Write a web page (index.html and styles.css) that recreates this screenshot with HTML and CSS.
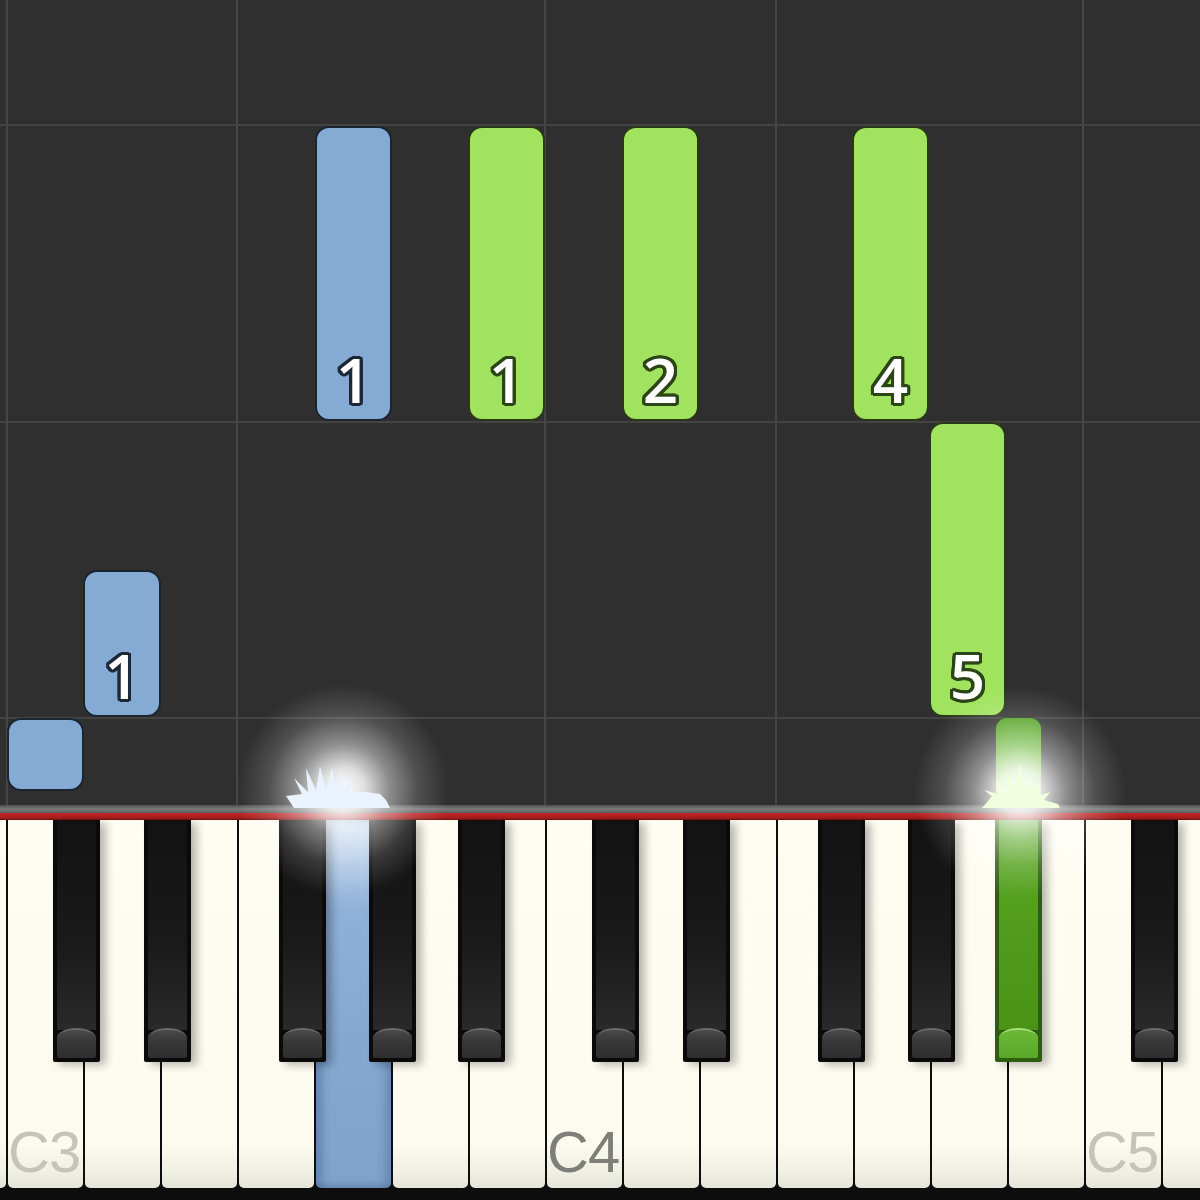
FILE: index.html
```html
<!DOCTYPE html>
<html>
<head>
<meta charset="utf-8">
<link rel="stylesheet" href="styles.css">
</head>
<body>
<div class="screen">
  <div class="roll">
    <div class="vl v1"></div><div class="vl v2"></div><div class="vl v3"></div><div class="vl v4"></div><div class="vl v5"></div>
    <div class="hl h1"></div><div class="hl h2"></div><div class="hl h3"></div>

    <div class="note blue n-a"><span class="num num-blue">1</span></div>
    <div class="note green n-b"><span class="num num-green">1</span></div>
    <div class="note green n-c"><span class="num num-green">2</span></div>
    <div class="note green n-d"><span class="num num-green">4</span></div>
    <div class="note green n-e"><span class="num num-green">5</span></div>
    <div class="note blue n-f"><span class="num num-blue">1</span></div>
    <div class="note blue n-g"></div>
    <div class="note active n-h"></div>
  </div>
  <div class="rail"></div>
  <div class="redline"></div>
  <div class="keyboard">
    <div class="whites">
      <div class="wk"></div>
      <div class="wk"><span class="klabel light">C3</span></div>
      <div class="wk"></div>
      <div class="wk"></div>
      <div class="wk"></div>
      <div class="wk pressed"></div>
      <div class="wk"></div>
      <div class="wk"></div>
      <div class="wk"><span class="klabel dark">C4</span></div>
      <div class="wk"></div>
      <div class="wk"></div>
      <div class="wk"></div>
      <div class="wk"></div>
      <div class="wk"></div>
      <div class="wk"></div>
      <div class="wk"><span class="klabel light">C5</span></div>
      <div class="wk"></div>
    </div>
    <div class="bk b1"></div>
    <div class="bk b2"></div>
    <div class="bk b3"></div>
    <div class="bk b4"></div>
    <div class="bk b5"></div>
    <div class="bk b6"></div>
    <div class="bk b7"></div>
    <div class="bk b8"></div>
    <div class="bk b9"></div>
    <div class="bk b10 on"></div>
    <div class="bk b11"></div>
  </div>

  <div class="glow glow-blue"></div>
  <div class="glow glow-green"></div>
  <svg class="spark spark-blue" width="110" height="44" viewBox="0 0 110 44">
    <polygon points="0,32 16,30 8,14 22,28 20,4 30,26 34,2 40,26 46,4 50,26 56,6 58,26 64,10 64,28 80,28 94,30 100,36 104,44 8,44" fill="#e9f2fe"/>
  </svg>
  <svg class="spark spark-green" width="80" height="46" viewBox="0 0 80 46">
    <polygon points="2,44 10,34 2,28 16,32 14,18 24,30 26,10 32,28 38,2 42,26 48,12 50,30 58,20 56,34 68,30 62,38 76,42 78,46 0,46" fill="#f2ffde"/>
  </svg>
</div>
</body>
</html>
```

FILE: styles.css
```css
html, body {
  margin: 0;
  padding: 0;
  background: #0d0d0d;
}

.screen {
  position: relative;
  width: 1200px;
  height: 1200px;
  overflow: hidden;
  background: #0d0d0d;
}

.roll {
  position: relative;
  height: 805px;
  background: #2f2f2f;
  overflow: hidden;
}

.vl {
  position: absolute;
  top: 0;
  bottom: 0;
  width: 2px;
  background: #464646;
}
.v1 { left: 6px; }
.v2 { left: 236px; }
.v3 { left: 544px; }
.v4 { left: 775px; }
.v5 { left: 1082px; }

.hl {
  position: absolute;
  left: 0;
  right: 0;
  height: 2px;
  background: #434343;
}
.h1 { top: 124px; }
.h2 { top: 421px; }
.h3 { top: 717px; }

.note {
  position: absolute;
  box-sizing: border-box;
  border: 2px solid;
  border-radius: 14px;
  display: flex;
  align-items: flex-end;
  justify-content: center;
}
.blue {
  background: #85aad4;
  border-color: #1b2531;
}
.green {
  background: #a1e35e;
  border-color: #28391a;
}
.active {
  border: none;
  border-radius: 11px 11px 0 0;
  background: linear-gradient(#4f9f1f, #6cbc34 45%, #a6df6e 85%, #d8f7b8);
  box-shadow: 0 0 0 1px #2a3a1e;
}

.n-a { left: 315px; top: 126px; width: 77px; height: 295px; }
.n-b { left: 468px; top: 126px; width: 77px; height: 295px; }
.n-c { left: 622px; top: 126px; width: 77px; height: 295px; }
.n-d { left: 852px; top: 126px; width: 77px; height: 295px; }
.n-e { left: 929px; top: 422px; width: 77px; height: 295px; }
.n-f { left: 83px; top: 570px; width: 78px; height: 147px; }
.n-g { left: 7px; top: 718px; width: 77px; height: 73px; }
.n-h { left: 996px; top: 718px; width: 45px; height: 100px; }

.num {
  font-family: "Open Sans", "DejaVu Sans", sans-serif;
  font-weight: 600;
  font-size: 62px;
  line-height: 62px;
  color: #ffffff;
  padding-bottom: 9px;
}
.num-blue {
  text-shadow:
    3px 0 0 #1c2837, -3px 0 0 #1c2837, 0 3px 0 #1c2837, 0 -3px 0 #1c2837,
    2px 2px 0 #1c2837, -2px -2px 0 #1c2837, 2px -2px 0 #1c2837, -2px 2px 0 #1c2837,
    3px 1px 0 #1c2837, -3px 1px 0 #1c2837, 3px -1px 0 #1c2837, -3px -1px 0 #1c2837,
    1px 3px 0 #1c2837, -1px 3px 0 #1c2837, 1px -3px 0 #1c2837, -1px -3px 0 #1c2837,
    3px 2px 0 #1c2837, -3px 2px 0 #1c2837, 3px -2px 0 #1c2837, -3px -2px 0 #1c2837;
}
.num-green {
  text-shadow:
    3px 0 0 #2b4516, -3px 0 0 #2b4516, 0 3px 0 #2b4516, 0 -3px 0 #2b4516,
    2px 2px 0 #2b4516, -2px -2px 0 #2b4516, 2px -2px 0 #2b4516, -2px 2px 0 #2b4516,
    3px 1px 0 #2b4516, -3px 1px 0 #2b4516, 3px -1px 0 #2b4516, -3px -1px 0 #2b4516,
    1px 3px 0 #2b4516, -1px 3px 0 #2b4516, 1px -3px 0 #2b4516, -1px -3px 0 #2b4516,
    3px 2px 0 #2b4516, -3px 2px 0 #2b4516, 3px -2px 0 #2b4516, -3px -2px 0 #2b4516;
}

.rail {
  height: 8px;
  background: linear-gradient(#505050, #7a7a7a 50%, #5c5c5c);
}
.redline {
  height: 7px;
  background: linear-gradient(#c42727, #a81c1c 70%, #701010);
}

.keyboard {
  position: relative;
  height: 368px;
}

.whites {
  display: flex;
  gap: 2px;
  height: 100%;
  margin-left: -69px;
}
.wk {
  flex: 0 0 75px;
  box-sizing: border-box;
  background: linear-gradient(#fffdf2, #fdfbf0 88%, #efeee3 96%, #e6e5da);
  border-radius: 0 0 5px 5px;
  display: flex;
  align-items: flex-end;
  overflow: hidden;
}
.wk.pressed {
  background: linear-gradient(#c7daf0, #8fb0d8 25%, #84a8d2 60%, #7ea2cc);
  box-shadow: inset 6px 0 8px rgba(20, 40, 70, 0.25), inset -6px 0 8px rgba(20, 40, 70, 0.2);
}

.klabel {
  font-family: "Liberation Sans", Arial, sans-serif;
  font-size: 58px;
  line-height: 58px;
  padding-bottom: 7px;
  letter-spacing: -1px;
}
.klabel.light { color: #c4c4bd; }
.klabel.dark { color: #7f7f7a; }

.bk {
  position: absolute;
  top: 0;
  width: 47px;
  height: 242px;
  background: #0a0a0a;
  border-radius: 0 0 2px 2px;
  box-shadow: 6px 3px 8px rgba(0, 0, 0, 0.28);
}
.bk::before {
  content: "";
  position: absolute;
  left: 4px;
  right: 4px;
  top: 0;
  height: 210px;
  background: linear-gradient(#121212, #1a1a1a 60%, #2a2a2a);
}
.bk::after {
  content: "";
  position: absolute;
  left: 4px;
  right: 4px;
  top: 208px;
  height: 28px;
  border-radius: 50% 50% 2px 2px / 10px 10px 2px 2px;
  border-top: 2px solid #6a6a6a;
  background: linear-gradient(#4a4a4a, #383838 40%, #2e2e2e);
}
.bk.on {
  background: #2f5d10;
}
.bk.on::before {
  background: linear-gradient(#5aa825, #4f9a1a 60%, #4a9317);
}
.bk.on::after {
  border-top-color: #a8e07a;
  background: linear-gradient(#6ab836, #5aa828);
}

.b1 { left: 53px; }
.b2 { left: 144px; }
.b3 { left: 279px; }
.b4 { left: 369px; }
.b5 { left: 458px; }
.b6 { left: 592px; }
.b7 { left: 683px; }
.b8 { left: 818px; }
.b9 { left: 908px; }
.b10 { left: 995px; }
.b11 { left: 1131px; }

.glow {
  position: absolute;
  width: 220px;
  height: 220px;
  border-radius: 50%;
  pointer-events: none;
  background: radial-gradient(circle,
    rgba(255, 255, 255, 1) 0%,
    rgba(255, 255, 255, 0.85) 14%,
    rgba(255, 255, 255, 0.45) 30%,
    rgba(255, 255, 255, 0.16) 48%,
    rgba(255, 255, 255, 0) 68%);
}
.glow-blue { left: 233px; top: 680px; }
.glow-green { left: 910px; top: 682px; }

.spark {
  position: absolute;
  pointer-events: none;
}
.spark-blue { left: 286px; top: 764px; }
.spark-green { left: 982px; top: 762px; }
```
